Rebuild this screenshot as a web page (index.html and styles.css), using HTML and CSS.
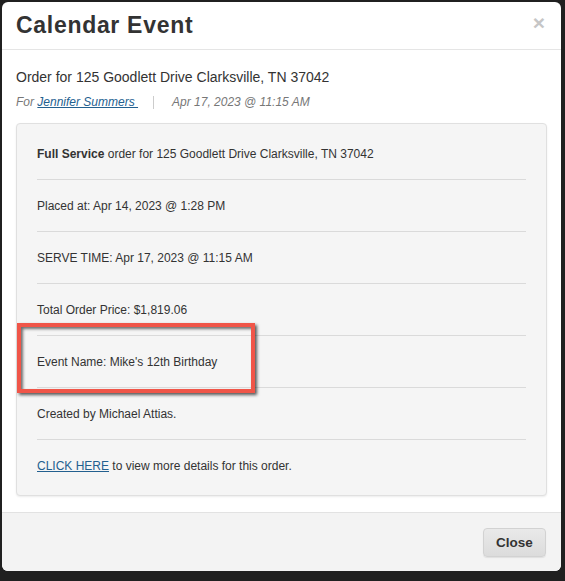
FILE: index.html
```html
<!DOCTYPE html>
<html lang="en">
<head>
<meta charset="utf-8">
<title>Calendar Event</title>
<link rel="stylesheet" href="styles.css">
</head>
<body>
<div class="modal">
  <div class="modal-header">
    <h1 class="modal-title">Calendar Event</h1>
    <span class="close">&times;</span>
  </div>
  <div class="modal-body">
    <p class="order-title">Order for 125 Goodlett Drive Clarksville, TN 37042</p>
    <div class="meta">For <a class="link" href="#">Jennifer Summers </a><span class="sep"></span>Apr 17, 2023 @ 11:15 AM</div>
    <div class="well">
      <div class="row"><b>Full Service</b> order for 125 Goodlett Drive Clarksville, TN 37042</div>
      <div class="row">Placed at: Apr 14, 2023 @ 1:28 PM</div>
      <div class="row">SERVE TIME: Apr 17, 2023 @ 11:15 AM</div>
      <div class="row">Total Order Price: $1,819.06</div>
      <div class="row row-marked">Event Name: Mike's 12th Birthday<span class="highlight"></span></div>
      <div class="row">Created by Michael Attias.</div>
      <div class="row"><a class="link" href="#">CLICK HERE</a> to view more details for this order.</div>
    </div>
  </div>
  <div class="modal-footer">
    <button class="btn">Close</button>
  </div>
</div>
</body>
</html>
```

FILE: styles.css
```css
html, body {
  margin: 0;
  padding: 0;
}
body {
  background: #202020;
  font-family: "Liberation Sans", Arial, sans-serif;
  color: #333;
  height: 581px;
  overflow: hidden;
}
.modal {
  margin: 2px 0 0 2px;
  width: 559px;
  background: #fff;
  border-radius: 6px;
  overflow: hidden;
}
.modal-header {
  display: flex;
  justify-content: space-between;
  align-items: center;
  padding: 9px 15px 10px 14px;
  border-bottom: 1px solid #e5e5e5;
}
.modal-title {
  margin: 0;
  font-size: 23px;
  letter-spacing: 0.7px;
  line-height: 28px;
  font-weight: 700;
  color: #333;
}
.close {
  font-size: 21px;
  font-weight: 700;
  line-height: 1;
  color: #c6c6c6;
  margin-top: -5px;
  margin-right: 1px;
}
.modal-body {
  padding: 17px 14px 16px;
}
.order-title {
  margin: 0;
  font-size: 14px;
  line-height: 20px;
  color: #333;
}
.meta {
  margin-top: 7px;
  font-size: 12px;
  line-height: 17px;
  font-style: italic;
  color: #777;
  display: flex;
  align-items: center;
  white-space: pre;
}
.link {
  color: #23608f;
  text-decoration: underline;
}
.sep {
  display: inline-block;
  width: 0;
  height: 13px;
  border-left: 1px solid #ccc;
  margin: 0 18px 0 15px;
}
.well {
  margin-top: 12px;
  background: #f5f5f5;
  border: 1px solid #e0e0e0;
  border-radius: 4px;
  box-shadow: 0 1px 2px rgba(0, 0, 0, 0.08);
  padding: 4px 20px;
}
.row {
  position: relative;
  font-size: 12px;
  line-height: 18px;
  padding: 17px 0 16px;
  border-bottom: 1px solid #dadada;
  color: #333;
}
.row:last-child {
  border-bottom: none;
}
.row b {
  font-weight: 700;
}
.highlight {
  position: absolute;
  left: -20px;
  top: -13px;
  width: 238px;
  height: 70px;
  box-sizing: border-box;
  border: 4px solid #f05548;
  box-shadow: 2px 2px 3px rgba(0, 0, 0, 0.65), inset 2px 2px 3px rgba(0, 0, 0, 0.55);
  pointer-events: none;
}
.modal-footer {
  display: flex;
  justify-content: flex-end;
  padding: 15px 15px 14px;
  border-top: 1px solid #e2e2e2;
  background: #f3f3f3;
}
.btn {
  font-family: "Liberation Sans", Arial, sans-serif;
  font-size: 13.5px;
  font-weight: 700;
  line-height: 17px;
  color: #333;
  padding: 5px 12px;
  border: 1px solid #d2d2d2;
  border-radius: 4px;
  background: linear-gradient(#e9e9e9, #dcdcdc);
  box-shadow: 0 1px 1px rgba(0, 0, 0, 0.08);
  width: 63px;
  height: 29px;
  box-sizing: border-box;
}
```
